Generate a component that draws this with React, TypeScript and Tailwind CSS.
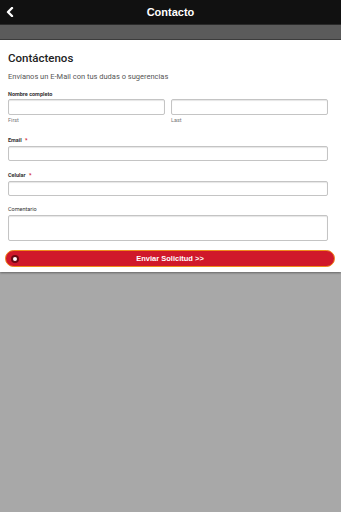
import React from 'react';

export default function App() {
  const font = { fontFamily: 'Roboto, "Liberation Sans", sans-serif' };
  return (
    <div className="w-[341px] h-[512px] bg-[#a8a8a8] flex flex-col" style={font}>
      {/* Header */}
      <header className="h-[25px] bg-[#111111] relative flex items-center justify-center border-b border-[#2a2a2a]">
        <svg className="absolute left-[6px] top-[7px]" width="8" height="10" viewBox="0 0 8 10">
          <path d="M6 1 L2 5 L6 9" stroke="white" strokeWidth="2.4" fill="none" strokeLinecap="round" strokeLinejoin="round" />
        </svg>
        <span className="text-white text-[11px] font-bold" style={{ fontFamily: '"Liberation Sans", Arial, sans-serif' }}>Contacto</span>
      </header>
      <div className="h-[15px] bg-[#5b5b5b] border-b border-[#3e3e3e]" />

      {/* Form panel */}
      <div className="bg-white pl-[8px] pr-[13px] pt-[11px] pb-[5px] shadow-[0_1px_2px_rgba(0,0,0,0.4)]">
        <h1 className="text-[11.5px] font-medium text-[#222] leading-[14px]">Contáctenos</h1>
        <p className="text-[7.5px] text-[#555] mt-[7px] leading-[10px]">Envíanos un E-Mail con tus dudas o sugerencias</p>

        <div className="mt-[8px]">
          <label className="block text-[5.5px] font-bold text-[#333] leading-[8px]">Nombre completo</label>
          <div className="flex gap-[6px] mt-[1px]">
            <div className="flex-1">
              <div className="h-[16px] border border-[#c4c4c4] rounded-[2px] shadow-[inset_0_1px_1px_rgba(0,0,0,0.1)]" />
              <span className="block text-[5.5px] text-[#777] leading-[8px] mt-[1px]">First</span>
            </div>
            <div className="flex-1">
              <div className="h-[16px] border border-[#c4c4c4] rounded-[2px] shadow-[inset_0_1px_1px_rgba(0,0,0,0.1)]" />
              <span className="block text-[5.5px] text-[#777] leading-[8px] mt-[1px]">Last</span>
            </div>
          </div>
        </div>

        <div className="mt-[12px]">
          <label className="block text-[5.5px] font-bold text-[#333] leading-[8px]">Email <span className="text-[#d0182a] ml-[2px]">*</span></label>
          <div className="h-[15px] mt-[2px] border border-[#c4c4c4] rounded-[2px] shadow-[inset_0_1px_1px_rgba(0,0,0,0.1)]" />
        </div>

        <div className="mt-[10px]">
          <label className="block text-[5.5px] font-bold text-[#333] leading-[8px]">Celular <span className="text-[#d0182a] ml-[2px]">*</span></label>
          <div className="h-[15px] mt-[2px] border border-[#c4c4c4] rounded-[2px] shadow-[inset_0_1px_1px_rgba(0,0,0,0.1)]" />
        </div>

        <div className="mt-[9px]">
          <label className="block text-[5.5px] text-[#333] leading-[8px]">Comentario</label>
          <div className="h-[26px] mt-[2px] border border-[#c4c4c4] rounded-[2px] shadow-[inset_0_1px_1px_rgba(0,0,0,0.1)]" />
        </div>

        <div className="-ml-[3px] -mr-[7px] mt-[9px] h-[17px] bg-[#d0182a] border border-[#f08a1c] rounded-full relative flex items-center justify-center">
          <span className="absolute left-[5px] top-[3.5px] w-[8px] h-[8px] rounded-full bg-[#6b0a14] flex items-center justify-center">
            <span className="w-[4px] h-[4px] rounded-full bg-white" />
          </span>
          <span className="text-white text-[7.5px] font-bold" style={{ fontFamily: '"Liberation Sans", Arial, sans-serif' }}>Enviar Solicitud &gt;&gt;</span>
        </div>
      </div>
    </div>
  );
}
